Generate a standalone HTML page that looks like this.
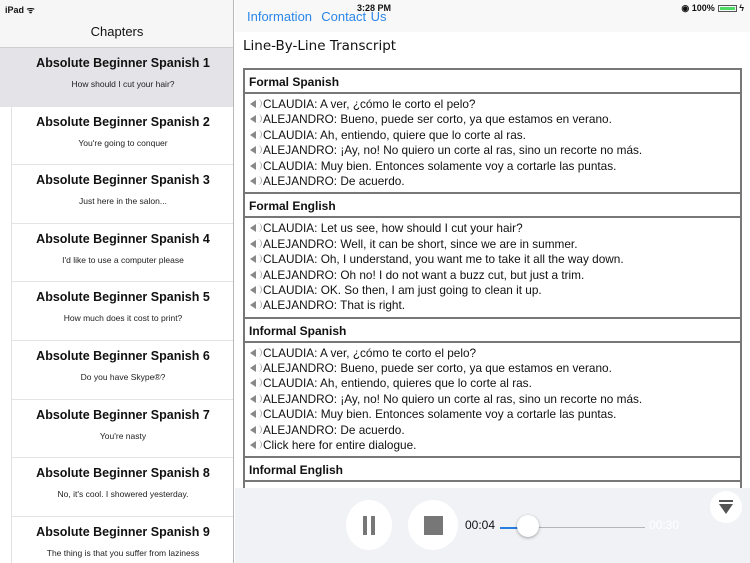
<!DOCTYPE html>
<html><head><meta charset="utf-8"><style>
*{margin:0;padding:0;box-sizing:border-box}
body{width:750px;height:563px;overflow:hidden;background:#fff;font-family:"Liberation Sans",Arial,sans-serif;position:relative;color:#111}
#side{position:absolute;left:0;top:0;width:234px;height:563px;background:#fff;border-right:1px solid #b8b8b8;overflow:hidden}
#sh{position:absolute;left:0;top:0;width:234px;height:48px;background:#f6f6f7;border-bottom:1px solid #cfcfd2}
#sh .st{position:absolute;left:5px;top:3px;font-size:9px;font-weight:bold}
#sh .t{position:absolute;left:0;width:234px;top:24px;text-align:center;font-size:13px}
.vl{position:absolute;left:11px;top:48px;width:1px;height:515px;background:#e2e2e4}
.row{position:absolute;left:12px;width:222px;height:58.6px;border-bottom:1px solid #e4e4e6;text-align:center}
.row b{display:block;font-size:12.5px;margin-top:8px}
.row span{display:block;font-size:8.5px;margin-top:9px;color:#222}
#top{position:absolute;left:235px;top:0;width:515px;height:32px;background:#f8f8f8}
#top .l{position:absolute;left:12px;top:9px;font-size:13px;color:#2a86e8;word-spacing:1px}
#top .tm{position:absolute;left:122px;top:3px;font-size:9px;font-weight:bold}
#top .bt{position:absolute;right:6px;top:3px;font-size:9px;font-weight:bold}
.bat{display:inline-block;width:19px;height:7px;border:1px solid #555;vertical-align:-1px;margin-left:3px;padding:1px}
.bat i{display:block;width:100%;height:100%;background:#4cd964}
#tt{position:absolute;left:243px;top:38px;font-family:"DejaVu Sans",sans-serif;font-size:13.5px}
#tb{position:absolute;left:243px;top:68px;width:499px;height:440px;border:2px solid #777;border-bottom:none}
.h{height:24px;border-bottom:2px solid #777;font-weight:bold;font-size:12px;padding:5px 0 0 4px}
.c{border-bottom:2px solid #777;font-size:11.8px;padding:3px 0 3px 4px}
.c div{height:15.4px;line-height:15.4px;padding-left:14px;position:relative;white-space:nowrap}
.c div::before{content:"";position:absolute;left:1px;top:3px;width:0;height:0;border-top:4px solid transparent;border-bottom:4px solid transparent;border-right:6px solid #888}
.c div::after{content:"";position:absolute;left:5px;top:2px;width:7px;height:9px;border-right:1.5px solid #aaa;border-radius:0 50% 50% 0}
#pl{position:absolute;left:235px;top:488px;width:515px;height:75px;background:#f1f2f6}
.circ{position:absolute;background:#fff;border-radius:50%}
</style></head><body>
<div id="side">
<div id="sh"><div class="st">iPad ᯤ</div><div class="t">Chapters</div></div>
<div class="vl"></div>
<div class="row" style="top:48px;left:0;width:234px;background:#e4e4e8;padding-left:12px"><b>Absolute Beginner Spanish 1</b><span>How should I cut your hair?</span></div>
<div class="row" style="top:106.6px"><b>Absolute Beginner Spanish 2</b><span>You're going to conquer</span></div>
<div class="row" style="top:165.2px"><b>Absolute Beginner Spanish 3</b><span>Just here in the salon...</span></div>
<div class="row" style="top:223.8px"><b>Absolute Beginner Spanish 4</b><span>I'd like to use a computer please</span></div>
<div class="row" style="top:282.4px"><b>Absolute Beginner Spanish 5</b><span>How much does it cost to print?</span></div>
<div class="row" style="top:341px"><b>Absolute Beginner Spanish 6</b><span>Do you have Skype®?</span></div>
<div class="row" style="top:399.6px"><b>Absolute Beginner Spanish 7</b><span>You're nasty</span></div>
<div class="row" style="top:458.2px"><b>Absolute Beginner Spanish 8</b><span>No, it's cool. I showered yesterday.</span></div>
<div class="row" style="top:516.8px"><b>Absolute Beginner Spanish 9</b><span>The thing is that you suffer from laziness</span></div>
</div>
<div id="top"><div class="l">Information&nbsp; Contact Us</div><div class="tm">3:28 PM</div><div class="bt">◉ 100%<span class="bat"><i></i></span> ϟ</div></div>
<div id="tt">Line-By-Line Transcript</div>
<div id="tb">
<div class="h">Formal Spanish</div>
<div class="c"><div>CLAUDIA: A ver, ¿cómo le corto el pelo?</div><div>ALEJANDRO: Bueno, puede ser corto, ya que estamos en verano.</div><div>CLAUDIA: Ah, entiendo, quiere que lo corte al ras.</div><div>ALEJANDRO: ¡Ay, no! No quiero un corte al ras, sino un recorte no más.</div><div>CLAUDIA: Muy bien. Entonces solamente voy a cortarle las puntas.</div><div>ALEJANDRO: De acuerdo.</div></div>
<div class="h">Formal English</div>
<div class="c"><div>CLAUDIA: Let us see, how should I cut your hair?</div><div>ALEJANDRO: Well, it can be short, since we are in summer.</div><div>CLAUDIA: Oh, I understand, you want me to take it all the way down.</div><div>ALEJANDRO: Oh no! I do not want a buzz cut, but just a trim.</div><div>CLAUDIA: OK. So then, I am just going to clean it up.</div><div>ALEJANDRO: That is right.</div></div>
<div class="h">Informal Spanish</div>
<div class="c"><div>CLAUDIA: A ver, ¿cómo te corto el pelo?</div><div>ALEJANDRO: Bueno, puede ser corto, ya que estamos en verano.</div><div>CLAUDIA: Ah, entiendo, quieres que lo corte al ras.</div><div>ALEJANDRO: ¡Ay, no! No quiero un corte al ras, sino un recorte no más.</div><div>CLAUDIA: Muy bien. Entonces solamente voy a cortarle las puntas.</div><div>ALEJANDRO: De acuerdo.</div><div>Click here for entire dialogue.</div></div>
<div class="h">Informal English</div>
</div>
<div id="pl">
<div class="circ" style="left:111px;top:12px;width:46px;height:50px"></div>
<div style="position:absolute;left:128px;top:28px;width:4px;height:19px;background:#777"></div>
<div style="position:absolute;left:136px;top:28px;width:4px;height:19px;background:#777"></div>
<div class="circ" style="left:173px;top:12px;width:50px;height:50px"></div>
<div style="position:absolute;left:189px;top:28px;width:19px;height:19px;background:#777"></div>
<div style="position:absolute;left:230px;top:30px;font-size:12px">00:04</div>
<div style="position:absolute;left:265px;top:39px;width:20px;height:2px;background:#2a7de0"></div>
<div style="position:absolute;left:285px;top:39px;width:125px;height:1px;background:#b5b5b5"></div>
<div style="position:absolute;left:282px;top:27px;width:22px;height:22px;border-radius:50%;background:#fff;box-shadow:0 1px 3px rgba(0,0,0,.35)"></div>
<div style="position:absolute;left:414px;top:30px;font-size:12px;color:#fff">00:30</div>
<div class="circ" style="left:475px;top:3px;width:32px;height:32px"></div>
<div style="position:absolute;left:484px;top:12px;width:14px;height:2px;background:#555"></div>
<div style="position:absolute;left:484px;top:16px;width:0;height:0;border-left:7px solid transparent;border-right:7px solid transparent;border-top:10px solid #555"></div>
</div>
</body></html>
